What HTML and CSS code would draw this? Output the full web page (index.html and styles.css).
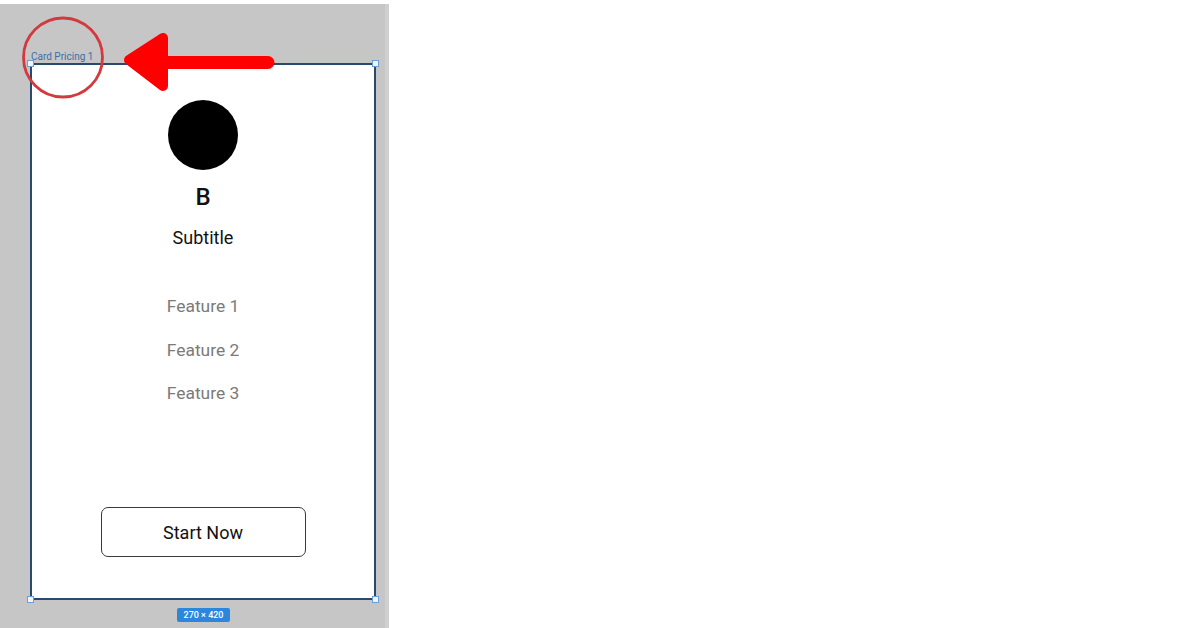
FILE: index.html
```html
<!DOCTYPE html>
<html>
<head>
<meta charset="utf-8">
<link rel="stylesheet" href="styles.css">
</head>
<body>
<div class="page">
  <div class="canvas">
    <div class="frame">
      <span class="frame-label">Card Pricing 1</span>
      <div class="card">
        <div class="avatar"></div>
        <div class="title">B</div>
        <div class="subtitle">Subtitle</div>
        <ul class="features">
          <li>Feature 1</li>
          <li>Feature 2</li>
          <li>Feature 3</li>
        </ul>
        <button class="cta">Start Now</button>
      </div>
      <span class="handle tl"></span>
      <span class="handle tr"></span>
      <span class="handle bl"></span>
      <span class="handle br"></span>
      <span class="size-badge">270 × 420</span>
    </div>
    <svg class="annotation" width="390" height="628" viewBox="0 0 390 628">
      <circle cx="63" cy="57.5" r="39.5" fill="none" stroke="#d3393e" stroke-width="2.8"/>
      <line x1="165" y1="62.5" x2="268" y2="62.5" stroke="#ff0000" stroke-width="13" stroke-linecap="round"/>
      <polygon points="129,60 163,38 163,86" fill="#ff0000" stroke="#ff0000" stroke-width="10" stroke-linejoin="round"/>
    </svg>
  </div>
  <div class="canvas-edge"></div>
</div>
</body>
</html>
```

FILE: styles.css
```css
* { box-sizing: border-box; }
html, body { margin: 0; padding: 0; background: #ffffff; }
body { font-family: Roboto, "Liberation Sans", Arial, sans-serif; }

.page {
  display: flex;
  align-items: stretch;
  height: 628px;
  padding-top: 4px;
}

.canvas {
  position: relative;
  width: 385px;
  background: #c6c6c6;
  padding: 59px 0 0 30px;
}

.canvas-edge {
  width: 4px;
  background: #cfcfcf;
}

.frame {
  position: relative;
  width: 346px;
  height: 537px;
}

.frame-label {
  position: absolute;
  left: 1px;
  top: -12px;
  font-size: 10px;
  line-height: 12px;
  color: #3d6ea8;
  white-space: nowrap;
}

.card {
  width: 346px;
  height: 537px;
  background: #ffffff;
  border: 2px solid #284a6e;
  display: flex;
  flex-direction: column;
  align-items: center;
  padding: 35px 0 41px;
}

.avatar {
  width: 70px;
  height: 70px;
  border-radius: 50%;
  background: #000000;
}

.title {
  margin-top: 13px;
  font-size: 24px;
  line-height: 28px;
  font-weight: 500;
  color: #111111;
}

.subtitle {
  margin-top: 15px;
  font-size: 18px;
  line-height: 24px;
  color: #111111;
}

.features {
  list-style: none;
  margin: 44px 0 0;
  padding: 0;
  display: flex;
  flex-direction: column;
  align-items: center;
  gap: 19.5px;
}

.features li {
  font-size: 17.4px;
  line-height: 24px;
  color: #7a7a7a;
}

.cta {
  margin-top: auto;
  width: 205px;
  height: 50px;
  background: #ffffff;
  border: 1.5px solid #3a3a3a;
  border-radius: 7px;
  font-family: inherit;
  font-size: 18px;
  color: #111111;
  padding: 0;
}

.handle {
  position: absolute;
  width: 7px;
  height: 7px;
  background: #eef4fb;
  border: 1px solid #6d9fd6;
}
.handle.tl { left: -3px; top: -3px; }
.handle.tr { right: -3px; top: -3px; }
.handle.bl { left: -3px; bottom: -3px; }
.handle.br { right: -3px; bottom: -3px; }

.size-badge {
  position: absolute;
  left: 147px;
  top: 545px;
  width: 53px;
  height: 14px;
  background: #2b86de;
  border-radius: 2px;
  color: #ffffff;
  font-size: 9px;
  line-height: 14px;
  text-align: center;
  font-weight: 500;
}

.annotation {
  position: absolute;
  left: 0;
  top: -4px;
  pointer-events: none;
}
```
